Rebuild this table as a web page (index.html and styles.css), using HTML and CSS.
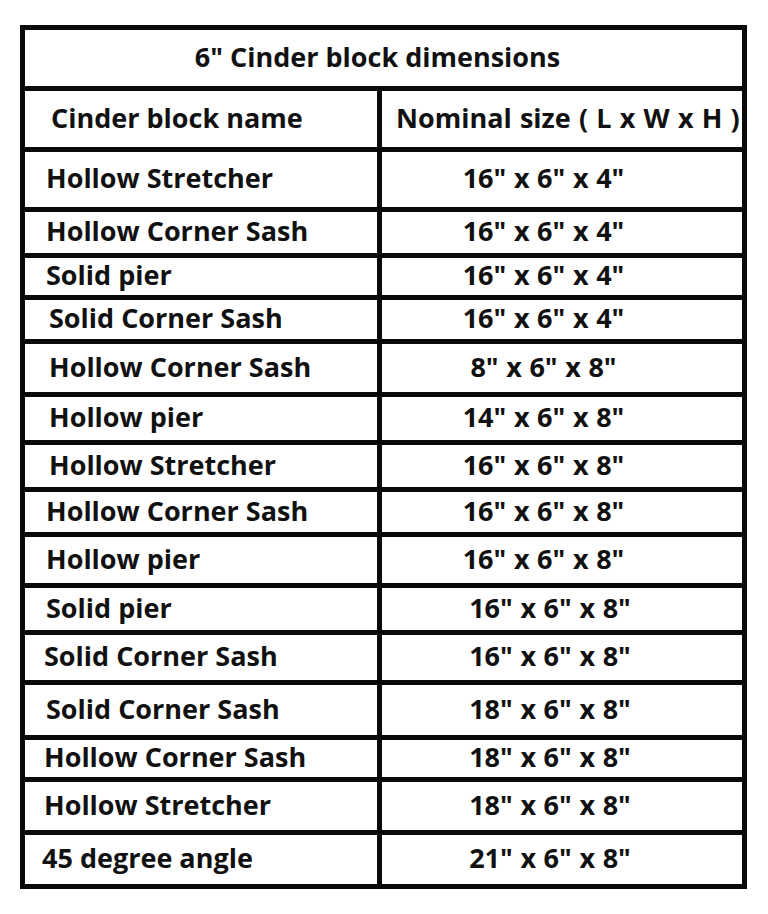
FILE: index.html
```html
<!DOCTYPE html>
<html lang="en">
<head>
<meta charset="utf-8">
<title>6" Cinder block dimensions</title>
<link rel="stylesheet" href="styles.css">
</head>
<body>
<div class="sheet">
  <div class="grid">
    <div class="cell title">6" Cinder block dimensions</div>
    <div class="cell head name">Cinder block name</div>
    <div class="cell head size">Nominal size ( L x W x H )</div>

    <div class="cell name">Hollow Stretcher</div><div class="cell val">16" x 6" x 4"</div>
    <div class="cell name">Hollow Corner Sash</div><div class="cell val">16" x 6" x 4"</div>
    <div class="cell name">Solid pier</div><div class="cell val">16" x 6" x 4"</div>
    <div class="cell name in-r">Solid Corner Sash</div><div class="cell val">16" x 6" x 4"</div>
    <div class="cell name in-r">Hollow Corner Sash</div><div class="cell val">8" x 6" x 8"</div>
    <div class="cell name in-r">Hollow pier</div><div class="cell val">14" x 6" x 8"</div>
    <div class="cell name in-r">Hollow Stretcher</div><div class="cell val">16" x 6" x 8"</div>
    <div class="cell name">Hollow Corner Sash</div><div class="cell val">16" x 6" x 8"</div>
    <div class="cell name">Hollow pier</div><div class="cell val">16" x 6" x 8"</div>
    <div class="cell name">Solid pier</div><div class="cell val val-r">16" x 6" x 8"</div>
    <div class="cell name in-l">Solid Corner Sash</div><div class="cell val val-r">16" x 6" x 8"</div>
    <div class="cell name">Solid Corner Sash</div><div class="cell val val-r">18" x 6" x 8"</div>
    <div class="cell name in-l">Hollow Corner Sash</div><div class="cell val val-r">18" x 6" x 8"</div>
    <div class="cell name in-l">Hollow Stretcher</div><div class="cell val val-r">18" x 6" x 8"</div>
    <div class="cell name in-ll">45 degree angle</div><div class="cell val val-r">21" x 6" x 8"</div>
  </div>
</div>
</body>
</html>
```

FILE: styles.css
```css
html, body {
  margin: 0;
  padding: 0;
  background: #ffffff;
}

.sheet {
  padding: 25px 0 0 20px;
}

.grid {
  display: grid;
  width: 717px;
  grid-template-columns: 352px 360px;
  grid-template-rows: 56px 56px 55px 41px 37px 39px 48px 43px 42px 40px 46px 42px 45px 50px 37px 48px 49px;
  gap: 5px;
  padding: 5px;
  background: #0a0a0a;
  font-family: "Open Sans", "Liberation Sans", sans-serif;
  font-weight: 700;
  font-size: 27px;
  color: #111111;
}

.cell {
  background: #ffffff;
  display: flex;
  align-items: center;
  padding-bottom: 4px;
  box-sizing: border-box;
  line-height: 1;
  white-space: nowrap;
}

.title {
  grid-column: 1 / span 2;
  justify-content: center;
  padding-right: 12px;
}

.name {
  padding-left: 21px;
}

.name.head {
  padding-left: 26px;
}

.size.head {
  padding-left: 14px;
  word-spacing: 1.2px;
}

.in-r { padding-left: 24px; }
.in-l { padding-left: 19px; }
.in-ll { padding-left: 17px; }

.val {
  justify-content: center;
  padding-right: 37px;
  word-spacing: 0.6px;
}

.val-r {
  padding-right: 24px;
}
```
